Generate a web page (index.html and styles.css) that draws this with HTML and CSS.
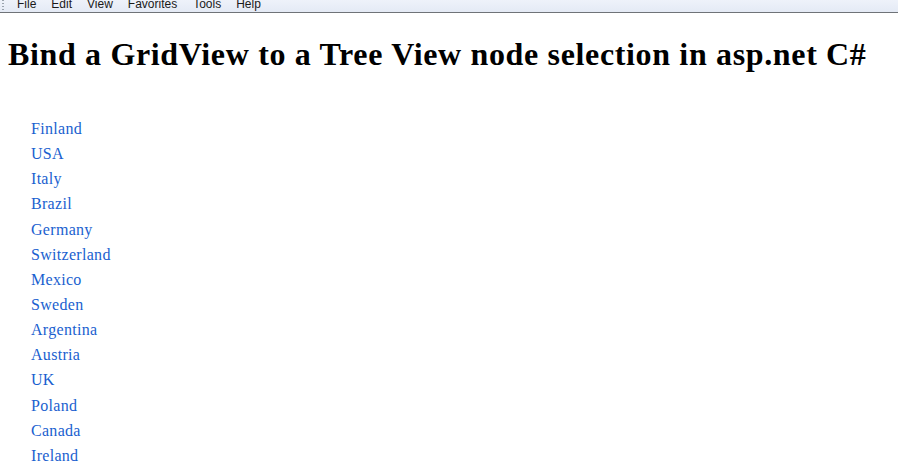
FILE: index.html
```html
<!DOCTYPE html>
<html>
<head>
<meta charset="utf-8">
<title>Bind a GridView to a Tree View node selection</title>
<link rel="stylesheet" href="styles.css">
</head>
<body>
<div class="menubar">
  <span class="grip"></span>
  <span class="menu-item">File</span>
  <span class="menu-item">Edit</span>
  <span class="menu-item">View</span>
  <span class="menu-item wide">Favorites</span>
  <span class="menu-item">Tools</span>
  <span class="menu-item">Help</span>
</div>
<div class="page">
  <h1 class="title">Bind a GridView to a Tree View node selection in asp.net C#</h1>
  <ul class="tree">
    <li><a href="#">Finland</a></li>
    <li><a href="#">USA</a></li>
    <li><a href="#">Italy</a></li>
    <li><a href="#">Brazil</a></li>
    <li><a href="#">Germany</a></li>
    <li><a href="#">Switzerland</a></li>
    <li><a href="#">Mexico</a></li>
    <li><a href="#">Sweden</a></li>
    <li><a href="#">Argentina</a></li>
    <li><a href="#">Austria</a></li>
    <li><a href="#">UK</a></li>
    <li><a href="#">Poland</a></li>
    <li><a href="#">Canada</a></li>
    <li><a href="#">Ireland</a></li>
  </ul>
</div>
</body>
</html>
```

FILE: styles.css
```css
html, body {
  margin: 0;
  padding: 0;
  background: #ffffff;
  overflow: hidden;
}

body {
  font-family: "Liberation Serif", "Times New Roman", serif;
}

.menubar {
  height: 12px;
  background: linear-gradient(#eef2fa, #e4eaf5);
  border-bottom: 1px solid #6f7378;
  display: flex;
  align-items: flex-end;
  overflow: hidden;
  font-family: "Liberation Sans", Arial, sans-serif;
  font-size: 12px;
  color: #1a1a1a;
}

.grip {
  width: 2px;
  height: 12px;
  margin-left: 2px;
  margin-right: 13px;
  background: repeating-linear-gradient(#9aa3ad 0 1px, transparent 1px 3px);
  align-self: stretch;
}

.menu-item {
  line-height: 12px;
  margin-bottom: 2px;
  margin-right: 15px;
  white-space: nowrap;
}

.menu-item.wide {
  margin-right: 16px;
}

.page {
  padding: 0 8px;
}

.title {
  margin: 23px 0 0 0;
  font-size: 32px;
  font-weight: bold;
  line-height: 37px;
  letter-spacing: 0.65px;
  color: #000;
  white-space: nowrap;
}

.tree {
  list-style: none;
  margin: 43px 0 0 0;
  padding: 0 0 0 23px;
  display: flex;
  flex-direction: column;
}

.tree li {
  height: 25.15px;
  line-height: 25px;
  font-size: 16px;
  letter-spacing: 0.3px;
}

.tree a {
  color: #1a5fcf;
  text-decoration: none;
}
```
